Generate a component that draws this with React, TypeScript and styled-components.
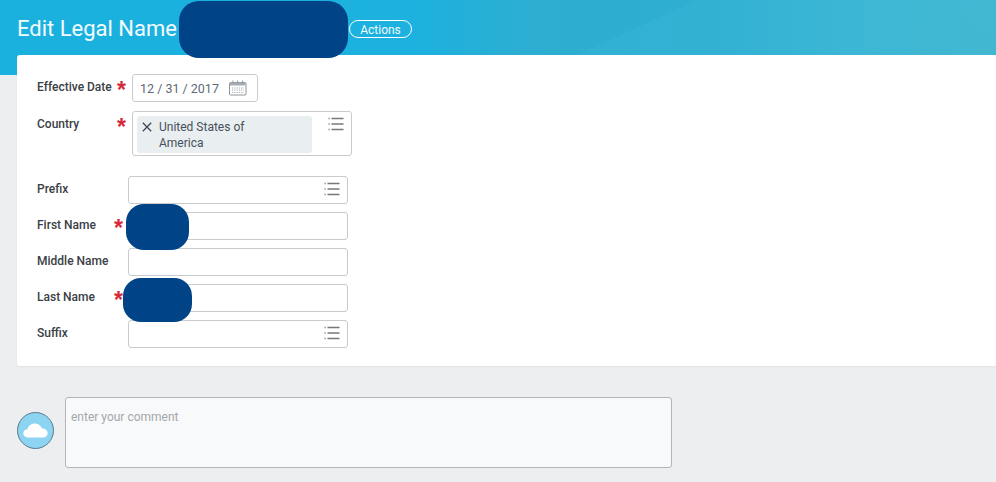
import React from "react";
import styled, { createGlobalStyle } from "styled-components";

const Global = createGlobalStyle`
  html, body { margin: 0; padding: 0; background: #edeef0; }
  body { font-family: Roboto, "Liberation Sans", sans-serif; width: 996px; height: 482px; overflow: hidden; }
`;
const Page = styled.div`
  width: 996px;
  height: 482px;
  display: flex;
  flex-direction: column;
  background: #edeef0;
  overflow: hidden;
`;
const Header = styled.header`
  height: 75px;
  flex: none;
  box-sizing: border-box;
  padding: 15px 0 0 17px;
  display: flex;
  align-items: flex-start;
  position: relative;
  background:
    linear-gradient(155.4deg, transparent 0 60%, rgba(70,195,230,0.14) 60.2% 82%, rgba(70,190,215,0.06) 100%),
    linear-gradient(90deg, #1ab1df 0%, #1cb1de 42%, #2cafd2 52%, #2faed0 72%, #3ab5d2 85%, #42b6cf 100%);
`;
const Title = styled.h1`
  margin: 0;
  font-weight: 400;
  font-size: 22px;
  line-height: 28px;
  color: #f4fbfe;
  white-space: nowrap;
`;
const Actions = styled.button`
  position: absolute;
  left: 349px;
  top: 20px;
  width: 63px;
  height: 18px;
  padding: 1px 0 0;
  box-sizing: border-box;
  border: 1px solid #fff;
  border-radius: 9px;
  background: transparent;
  color: #f0fafd;
  font: 400 12px/16px Roboto, sans-serif;
`;
const Redaction = styled.div<{ $l: number; $t: number; $w: number; $h: number; $r: number }>`
  position: absolute;
  left: ${p => p.$l}px;
  top: ${p => p.$t}px;
  width: ${p => p.$w}px;
  height: ${p => p.$h}px;
  border-radius: ${p => p.$r}px;
  background: #004387;
  z-index: 3;
`;
const Card = styled.main`
  position: relative;
  z-index: 1;
  margin: -20px 0 0 17px;
  height: 311px;
  box-sizing: border-box;
  padding: 19px 0 0 20px;
  background: #fff;
  border-radius: 3px 0 0 3px;
  box-shadow: 0 1px 2px rgba(0,0,0,0.05);
  display: flex;
  flex-direction: column;
`;
const Row = styled.div<{ $mb: number }>`
  display: flex;
  align-items: flex-start;
  margin-bottom: ${p => p.$mb}px;
`;
const Label = styled.label<{ $w: number }>`
  width: ${p => p.$w}px;
  flex: none;
  font-weight: 500;
  font-size: 12px;
  line-height: 16px;
  padding-top: 5px;
  color: #3a4045;
  white-space: nowrap;
  position: relative;
`;
const Star = styled.span<{ $x: number }>`
  position: absolute;
  left: ${p => p.$x}px;
  top: 5px;
  color: #d5293a;
  font: 700 23px/23px "Liberation Sans", sans-serif;
`;
const Field = styled.div<{ $w: number; $h?: number }>`
  width: ${p => p.$w}px;
  height: ${p => p.$h ?? 28}px;
  box-sizing: border-box;
  border: 1px solid #c9cbce;
  border-radius: 3px;
  background: #fff;
  position: relative;
  display: flex;
  align-items: center;
  font-size: 12.5px;
  color: #5e6a75;
`;
const DateText = styled.span`
  margin-left: 7px;
  white-space: pre;
`;
const CalendarSlot = styled.svg`
  position: absolute;
  left: 96px;
  top: 5px;
`;
const ListSlot = styled.svg<{ $t: number; $l: number }>`
  position: absolute;
  left: ${p => p.$l}px;
  top: ${p => p.$t}px;
`;
const Chip = styled.div`
  position: absolute;
  left: 4px;
  top: 4px;
  width: 175px;
  height: 37px;
  background: #e9eef0;
  border-radius: 3px;
  display: flex;
  align-items: flex-start;
  box-sizing: border-box;
  padding: 3px 0 0 5px;
  color: #46505a;
  font-size: 12px;
  line-height: 16px;
`;
const ChipX = styled.svg`
  flex: none;
  margin: 3px 7px 0 0;
`;
const Gap = styled.div`
  height: 20px;
`;
const CommentRow = styled.section`
  display: flex;
  align-items: flex-start;
  margin: 31px 0 0 17px;
`;
const Avatar = styled.div`
  width: 37px;
  height: 37px;
  margin-top: 15px;
  box-sizing: border-box;
  border: 1px solid #5f7a8c;
  border-radius: 50%;
  background: #8dd3f2;
  display: flex;
  align-items: center;
  justify-content: center;
`;
const Comment = styled.div`
  width: 607px;
  height: 71px;
  margin-left: 11px;
  box-sizing: border-box;
  border: 1px solid #b3b5b8;
  border-radius: 3px;
  background: #f8f9fa;
  padding: 11px 0 0 5px;
  font-size: 12px;
  line-height: 16px;
  color: #a4a8ac;
`;

const ListIcon = ({ t, l }: { t: number; l: number }) => (
  <ListSlot $t={t} $l={l} width="16" height="16" viewBox="0 0 16 16" fill="none" stroke="#75797e" strokeWidth="1.3">
    <path d="M3.5 2.5H15.5M3.5 8H15.5M3.5 13.5H15.5" />
    <path d="M0.5 2.5H1.6M0.5 8H1.6M0.5 13.5H1.6" />
  </ListSlot>
);
const Calendar = () => (
  <CalendarSlot width="18" height="16" viewBox="0 0 18 16" fill="none">
    <rect x="0.5" y="2.5" width="16.5" height="12.5" rx="1" stroke="#8f969b" />
    <rect x="1" y="2.5" width="15.5" height="3" fill="#a5abb0" />
    <path d="M4 0.5V3M8.7 0.5V3M13.5 0.5V3" stroke="#8f969b" />
    <path d="M3 8H15M3 10H15M3 12.4H15" stroke="#a5abb0" strokeDasharray="1.2 1.1" />
  </CalendarSlot>
);

export default function App() {
  return (
    <Page>
      <Global />
      <Header>
        <Title>Edit Legal Name</Title>
        <Actions>Actions</Actions>
      </Header>
      <Card>
        <Row $mb={9}>
          <Label $w={95}>Effective Date<Star $x={80}>*</Star></Label>
          <Field $w={126}>
            <DateText>12 / 31 / 2017</DateText>
            <Calendar />
          </Field>
        </Row>
        <Row $mb={0}>
          <Label $w={95}>Country<Star $x={80}>*</Star></Label>
          <Field $w={220} $h={45}>
            <Chip>
              <ChipX width="10" height="10" viewBox="0 0 10 10" stroke="#3f474e" strokeWidth="1.3">
                <path d="M0.8 0.8L9.2 9.2M9.2 0.8L0.8 9.2" />
              </ChipX>
              <span>United States of<br />America</span>
            </Chip>
            <ListIcon t={4} l={195} />
          </Field>
        </Row>
        <Gap />
        <Row $mb={8}>
          <Label $w={91}>Prefix</Label>
          <Field $w={220}><ListIcon t={4} l={195} /></Field>
        </Row>
        <Row $mb={8}>
          <Label $w={91}>First Name<Star $x={77}>*</Star></Label>
          <Field $w={220} />
        </Row>
        <Row $mb={8}>
          <Label $w={91}>Middle Name</Label>
          <Field $w={220} />
        </Row>
        <Row $mb={8}>
          <Label $w={91}>Last Name<Star $x={77}>*</Star></Label>
          <Field $w={220} />
        </Row>
        <Row $mb={0}>
          <Label $w={91}>Suffix</Label>
          <Field $w={220}><ListIcon t={4} l={195} /></Field>
        </Row>
      </Card>
      <CommentRow>
        <Avatar>
          <svg width="25" height="15" viewBox="0 0 25 15" fill="#fff">
            <path d="M5 14.5C2 14.5 0.3 12.6 0.3 10.3C0.3 8 2 6.3 4.4 6.2C5.2 2.8 8.2 0.5 11.8 0.5C15.3 0.5 18 2.7 19 5.6C22.2 5.6 24.7 7.7 24.7 10.3C24.7 12.8 22.8 14.5 20 14.5Z" />
          </svg>
        </Avatar>
        <Comment>enter your comment</Comment>
      </CommentRow>
      <Redaction $l={179} $t={1} $w={169} $h={57} $r={20} />
      <Redaction $l={126} $t={204} $w={63} $h={46} $r={18} />
      <Redaction $l={123} $t={278} $w={69} $h={44} $r={18} />
    </Page>
  );
}
